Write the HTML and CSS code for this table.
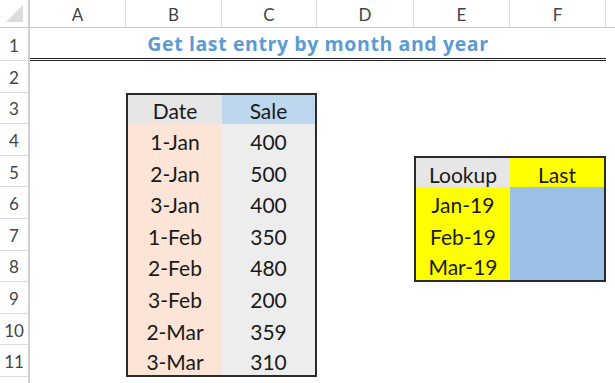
FILE: index.html
```html
<!DOCTYPE html>
<html>
<head>
<meta charset="utf-8">
<link rel="stylesheet" href="styles.css">
</head>
<body>
<div class="sheet">
  <div class="hdr">
    <div class="corner"><span class="tri"></span></div>
    <div class="ch wa">A</div>
    <div class="ch wb">B</div>
    <div class="ch wc">C</div>
    <div class="ch wd">D</div>
    <div class="ch we">E</div>
    <div class="ch wf">F</div>
    <div class="ch wg"></div>
  </div>

  <div class="row r1">
    <div class="rh">1</div>
    <div class="title">Get last entry by month and year</div>
  </div>

  <div class="row">
    <div class="rh">2</div>
  </div>

  <div class="row">
    <div class="rh">3</div>
    <div class="cell wa"></div>
    <div class="cell wb bg-gray t-top t-left">Date</div>
    <div class="cell wc bg-blue t-top t-right">Sale</div>
  </div>

  <div class="row">
    <div class="rh">4</div>
    <div class="cell wa"></div>
    <div class="cell wb bg-peach t-left">1-Jan</div>
    <div class="cell wc bg-lgray t-right">400</div>
  </div>

  <div class="row">
    <div class="rh">5</div>
    <div class="cell wa"></div>
    <div class="cell wb bg-peach t-left">2-Jan</div>
    <div class="cell wc bg-lgray t-right">500</div>
    <div class="cell wd"></div>
    <div class="cell we bg-gray t-top t-left">Lookup</div>
    <div class="cell wf bg-yellow t-top t-right">Last</div>
  </div>

  <div class="row">
    <div class="rh">6</div>
    <div class="cell wa"></div>
    <div class="cell wb bg-peach t-left">3-Jan</div>
    <div class="cell wc bg-lgray t-right">400</div>
    <div class="cell wd"></div>
    <div class="cell we bg-yellow t-left">Jan-19</div>
    <div class="cell wf bg-sky t-right"></div>
  </div>

  <div class="row">
    <div class="rh">7</div>
    <div class="cell wa"></div>
    <div class="cell wb bg-peach t-left">1-Feb</div>
    <div class="cell wc bg-lgray t-right">350</div>
    <div class="cell wd"></div>
    <div class="cell we bg-yellow t-left">Feb-19</div>
    <div class="cell wf bg-sky t-right"></div>
  </div>

  <div class="row">
    <div class="rh">8</div>
    <div class="cell wa"></div>
    <div class="cell wb bg-peach t-left">2-Feb</div>
    <div class="cell wc bg-lgray t-right">480</div>
    <div class="cell wd"></div>
    <div class="cell we bg-yellow t-left t-bottom">Mar-19</div>
    <div class="cell wf bg-sky t-right t-bottom"></div>
  </div>

  <div class="row">
    <div class="rh">9</div>
    <div class="cell wa"></div>
    <div class="cell wb bg-peach t-left">3-Feb</div>
    <div class="cell wc bg-lgray t-right">200</div>
  </div>

  <div class="row">
    <div class="rh">10</div>
    <div class="cell wa"></div>
    <div class="cell wb bg-peach t-left">2-Mar</div>
    <div class="cell wc bg-lgray t-right">359</div>
  </div>

  <div class="row">
    <div class="rh">11</div>
    <div class="cell wa"></div>
    <div class="cell wb bg-peach t-left t-bottom">3-Mar</div>
    <div class="cell wc bg-lgray t-right t-bottom">310</div>
  </div>

  <div class="row">
    <div class="rh"></div>
  </div>
</div>
</body>
</html>
```

FILE: styles.css
```css
* { box-sizing: border-box; }
html, body { margin: 0; padding: 0; background: #fff; }
.sheet {
  width: 615px;
  height: 383px;
  overflow: hidden;
  display: flex;
  flex-direction: column;
  font-family: Lato, "Open Sans", sans-serif;
  color: #1a1a1a;
}
.hdr {
  display: flex;
  height: 28px;
  flex: none;
  border-bottom: 1px solid #c8c8c8;
}
.corner {
  width: 30px;
  flex: none;
  border-right: 2px solid #d0d0d0;
  position: relative;
}
.tri {
  position: absolute;
  right: 5px;
  bottom: 5px;
  width: 0;
  height: 0;
  border-left: 17px solid transparent;
  border-bottom: 17px solid #dcdcdc;
}
.ch {
  flex: none;
  display: flex;
  align-items: center;
  justify-content: center;
  font-size: 17px;
  color: #444;
  border-right: 1px solid #dcdcdc;
  padding-top: 1px;
}
.wa { width: 96px; flex: none; }
.wb { width: 96px; flex: none; }
.wc { width: 95px; flex: none; }
.wd { width: 97px; flex: none; }
.we { width: 96px; flex: none; }
.wf { width: 96px; flex: none; }
.wg { width: 9px; flex: none; border-right: none; }

.row {
  display: flex;
  height: 31.6px;
  flex: none;
}
.r1 { height: 33px; }
.rh {
  width: 30px;
  flex: none;
  display: flex;
  align-items: center;
  justify-content: center;
  font-size: 17px;
  color: #444;
  border-right: 2px solid #d0d0d0;
  border-bottom: 1px solid #dcdcdc;
  padding-top: 2px;
}
.title {
  width: 576px;
  flex: none;
  display: flex;
  align-items: center;
  justify-content: center;
  font-family: "Open Sans", Lato, sans-serif;
  font-weight: 700;
  font-size: 19.5px;
  letter-spacing: 0.6px;
  color: #5b9bd5;
  border-bottom: 3px double #222;
  padding-top: 1px;
}
.cell {
  display: flex;
  align-items: center;
  justify-content: center;
  font-size: 21px;
  padding-top: 3px;
}
.bg-gray { background: #e7e6e6; }
.bg-blue { background: #bdd7ee; }
.bg-peach { background: #fce4d6; }
.bg-lgray { background: #ededed; }
.bg-yellow { background: #ffff00; }
.bg-sky { background: #9bc2e6; }
.t-top { border-top: 2px solid #2b2b2b; }
.t-bottom { border-bottom: 2px solid #2b2b2b; }
.t-left { border-left: 2px solid #2b2b2b; }
.t-right { border-right: 2px solid #2b2b2b; }
```
